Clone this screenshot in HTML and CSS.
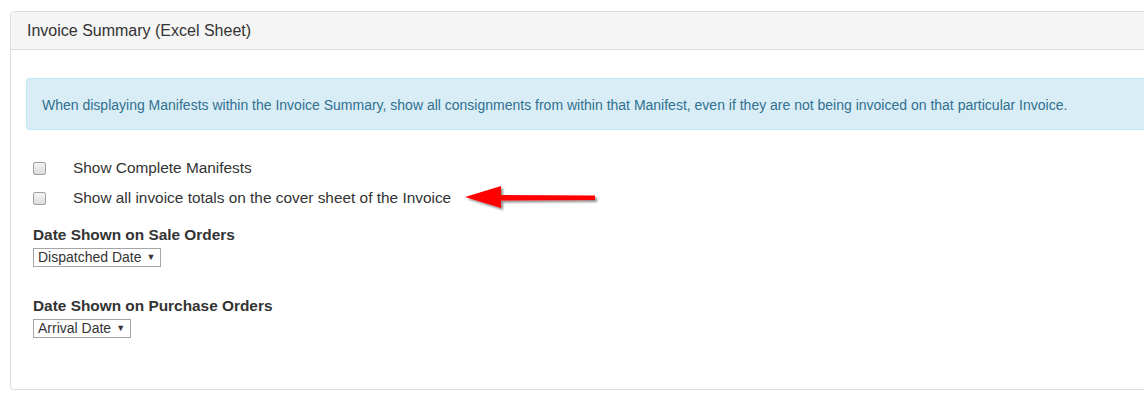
FILE: index.html
```html
<!DOCTYPE html>
<html>
<head>
<meta charset="utf-8">
<link rel="stylesheet" href="styles.css">
</head>
<body>
<div class="page">
  <div class="panel">
    <div class="panel-heading">Invoice Summary (Excel Sheet)</div>
    <div class="panel-body">
      <div class="alert">When displaying Manifests within the Invoice Summary, show all consignments from within that Manifest, even if they are not being invoiced on that particular Invoice.</div>
      <div class="checks">
        <label class="check"><span class="box"></span><span class="check-text">Show Complete Manifests</span></label>
        <label class="check"><span class="box"></span><span class="check-text">Show all invoice totals on the cover sheet of the Invoice</span>
          <svg class="arrow" width="150" height="34" viewBox="0 0 150 34">
            <defs>
              <filter id="sh" x="-10%" y="-30%" width="130%" height="180%">
                <feGaussianBlur in="SourceAlpha" stdDeviation="1.2"/>
                <feOffset dx="2" dy="2" result="b"/>
                <feComponentTransfer><feFuncA type="linear" slope="0.45"/></feComponentTransfer>
                <feMerge><feMergeNode/><feMergeNode in="SourceGraphic"/></feMerge>
              </filter>
            </defs>
            <path d="M4 16 L40 5 L40 14 L134 14.5 L134 19 L40 19.5 L40 27 Z" fill="#ff0000" filter="url(#sh)"/>
          </svg>
        </label>
      </div>
      <div class="field">
        <div class="field-label">Date Shown on Sale Orders</div>
        <span class="select">Dispatched Date<span class="caret">▼</span></span>
      </div>
      <div class="field">
        <div class="field-label">Date Shown on Purchase Orders</div>
        <span class="select">Arrival Date<span class="caret">▼</span></span>
      </div>
    </div>
  </div>
</div>
</body>
</html>
```
FILE: styles.css
```css
html, body {
  margin: 0;
  padding: 0;
  background: #fff;
  overflow: hidden;
}
body {
  font-family: "Liberation Sans", Arial, sans-serif;
  font-size: 15.4px;
  color: #333;
}
.page {
  padding: 11px 0 0 10px;
}
.panel {
  width: 1200px;
  height: 379px;
  box-sizing: border-box;
  border: 1px solid #dddddd;
  border-radius: 4px;
  box-shadow: 0 1px 1px rgba(0,0,0,0.05);
  background: #fff;
}
.panel-heading {
  background: #f5f5f5;
  border-bottom: 1px solid #dddddd;
  border-radius: 3px 3px 0 0;
  height: 38px;
  box-sizing: border-box;
  padding: 9px 16px 0 16px;
  font-size: 16px;
  line-height: 20px;
  color: #333;
}
.panel-body {
  padding: 28px 15px 0 15px;
}
.alert {
  background: #d9edf7;
  border: 1px solid #bce8f1;
  border-radius: 4px;
  color: #31708f;
  padding: 16px 15px 14px 15px;
  font-size: 14px;
  line-height: 20px;
}
.checks {
  display: flex;
  flex-direction: column;
  gap: 10px;
  margin-top: 28px;
  padding-left: 7px;
}
.check {
  position: relative;
  display: flex;
  align-items: center;
  height: 20px;
  line-height: 20px;
}
.box {
  width: 11px;
  height: 11px;
  border: 1px solid #a0a0a0;
  border-radius: 2px;
  background: linear-gradient(#f4f4f4, #dcdcdc);
  margin-right: 27px;
}
.arrow {
  position: absolute;
  left: 428px;
  top: -7px;
}
.field {
  display: flex;
  flex-direction: column;
  align-items: flex-start;
  padding-left: 7px;
}
.checks + .field {
  margin-top: 17px;
}
.field + .field {
  margin-top: 29px;
}
.field-label {
  font-weight: bold;
  font-size: 15.4px;
  line-height: 20px;
  margin-bottom: 3px;
}
.select {
  display: inline-flex;
  align-items: center;
  height: 17px;
  border: 1px solid #a6a6a6;
  padding: 0 5px 0 4px;
  font-size: 14px;
  line-height: 17px;
  color: #333;
  background: #fff;
}
.caret {
  font-size: 9px;
  margin-left: 5px;
  color: #333;
}
```
